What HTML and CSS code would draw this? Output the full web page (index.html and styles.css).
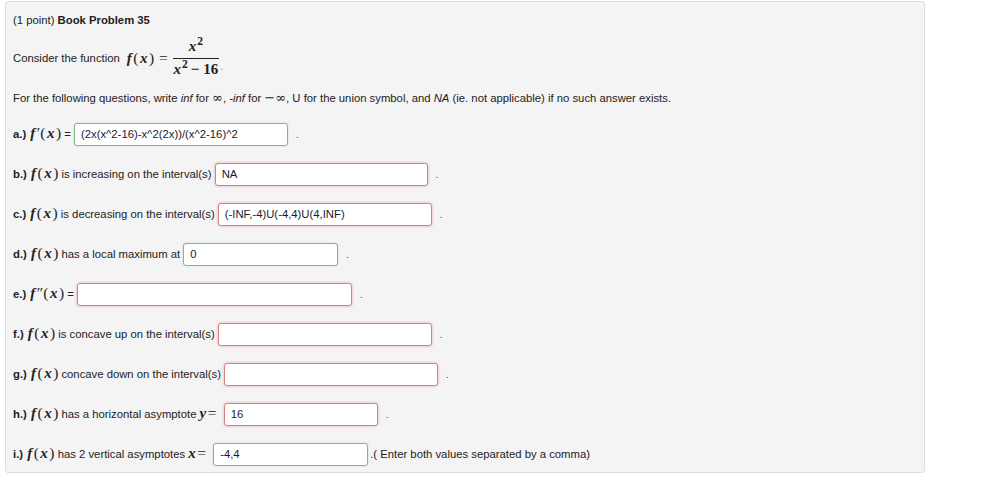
FILE: index.html
```html
<!DOCTYPE html>
<html>
<head>
<meta charset="utf-8">
<link rel="stylesheet" href="styles.css">
</head>
<body>
<div class="panel">
  <div class="title">(1 point) <b>Book Problem 35</b></div>
  <div class="consider"><span>Consider the function</span><span class="math fx"><span class="m">f</span><span class="mr">(</span><span class="m">x</span><span class="mr">)</span></span><span class="mr eq">=</span><span class="frac"><span class="num"><span class="m">x</span><span class="sup">2</span></span><span class="den"><span class="m">x</span><span class="sup">2</span><span class="mr minus">−</span><span class="mr">16</span></span></span><span class="dot">.</span></div>
  <div class="intro">For the following questions, write <i>inf</i> for <span class="inf">∞</span>, <i>-inf</i> for <span class="inf">−∞</span>, U for the union symbol, and <i>NA</i> (ie. not applicable) if no such answer exists.</div>
  <div class="rows">
    <div class="row"><b>a.)</b> <span class="math"><span class="m">f</span><span class="mr">′(</span><span class="m">x</span><span class="mr">)</span></span> = <span class="inp ok w214">(2x(x^2-16)-x^2(2x))/(x^2-16)^2</span><span class="per">.</span></div>
    <div class="row"><b>b.)</b> <span class="math"><span class="m">f</span><span class="mr">(</span><span class="m">x</span><span class="mr">)</span></span> is increasing on the interval(s) <span class="inp bad w213">NA</span><span class="per">.</span></div>
    <div class="row"><b>c.)</b> <span class="math"><span class="m">f</span><span class="mr">(</span><span class="m">x</span><span class="mr">)</span></span> is decreasing on the interval(s) <span class="inp bad w214">(-INF,-4)U(-4,4)U(4,INF)</span><span class="per">.</span></div>
    <div class="row"><b>d.)</b> <span class="math"><span class="m">f</span><span class="mr">(</span><span class="m">x</span><span class="mr">)</span></span> has a local maximum at <span class="inp ok w155">0</span><span class="per">.</span></div>
    <div class="row"><b>e.)</b> <span class="math"><span class="m">f</span><span class="mr">″(</span><span class="m">x</span><span class="mr">)</span></span> = <span class="inp bad w275"></span><span class="per">.</span></div>
    <div class="row"><b>f.)</b> <span class="math"><span class="m">f</span><span class="mr">(</span><span class="m">x</span><span class="mr">)</span></span> is concave up on the interval(s) <span class="inp bad w214"></span><span class="per">.</span></div>
    <div class="row"><b>g.)</b> <span class="math"><span class="m">f</span><span class="mr">(</span><span class="m">x</span><span class="mr">)</span></span> concave down on the interval(s) <span class="inp bad w214"></span><span class="per">.</span></div>
    <div class="row"><b>h.)</b> <span class="math"><span class="m">f</span><span class="mr">(</span><span class="m">x</span><span class="mr">)</span></span> has a horizontal asymptote <span class="math"><span class="m">y</span><span class="mr eq">=</span></span> <span class="inp bad w154">16</span><span class="per">.</span></div>
    <div class="row"><b>i.)</b> <span class="math"><span class="m">f</span><span class="mr">(</span><span class="m">x</span><span class="mr">)</span></span> has 2 vertical asymptotes <span class="math"><span class="m">x</span><span class="mr eq">=</span></span> <span class="inp ok w155">-4,4</span><span class="note">.( Enter both values separated by a comma)</span></div>
  </div>
</div>
</body>
</html>
```

FILE: styles.css
```css
html, body {
  margin: 0;
  padding: 0;
  background: #ffffff;
}
body {
  font-family: "Liberation Sans", Arial, sans-serif;
  font-size: 11.3px;
  color: #222;
}
.panel {
  margin: 1px 0 0 5px;
  width: 911px;
  height: 470px;
  background: #f4f4f4;
  border: 1px solid #dedede;
  border-radius: 3px;
  padding: 0 0 0 7px;
}
.title {
  height: 14px;
  line-height: 14px;
  margin-top: 11px;
}
.consider {
  display: flex;
  align-items: center;
  height: 40px;
  margin-top: 11px;
}
.m {
  font-family: "Liberation Serif", "Times New Roman", serif;
  font-style: italic;
  font-weight: bold;
  font-size: 15px;
}
.mr {
  font-family: "Liberation Serif", "Times New Roman", serif;
  font-size: 15.5px;
}
.math {
  white-space: nowrap;
}
.math .m + .mr,
.math .mr + .m {
  margin-left: 1.5px;
}
.fx {
  margin-left: 7px;
}
.eq {
  margin: 0 4px 0 5px;
}
.frac {
  display: inline-flex;
  flex-direction: column;
  align-items: center;
  margin-left: 1px;
  width: 46px;
}
.num {
  width: 100%;
  text-align: center;
  border-bottom: 1px solid #222;
  line-height: 19px;
  padding-bottom: 1px;
}
.den {
  line-height: 19px;
  padding-top: 1px;
  white-space: nowrap;
}
.frac .mr { font-weight: bold; font-size: 15px; }
.sup {
  font-family: "Liberation Serif", serif;
  font-weight: bold;
  font-size: 11.5px;
  position: relative;
  top: -6px;
  margin-left: 1px;
}
.minus {
  margin: 0 4px 0 3px;
}
.dot {
  margin-left: 2px;
  margin-top: 18px;
  font-size: 8px;
}
.intro {
  margin-top: 13px;
  height: 14px;
  line-height: 14px;
}
.inf {
  font-family: "DejaVu Serif", serif;
  font-size: 13px;
}
.rows {
  display: flex;
  flex-direction: column;
  gap: 17px;
  margin-top: 16px;
}
.row {
  height: 23px;
  line-height: 23px;
  white-space: nowrap;
}
.row b { margin-right: 1px; }
.inp {
  display: inline-block;
  vertical-align: middle;
  box-sizing: border-box;
  height: 23px;
  line-height: 21px;
  padding: 0 6px;
  background: #fff;
  border-radius: 3px;
  color: #1a1a2e;
  position: relative;
  top: -1px;
}
.ok {
  border: 1px solid #7fb97f;
  box-shadow: 0 0 2px rgba(92, 184, 92, 0.35);
}
.bad {
  border: 1px solid #d77f7f;
  box-shadow: 0 0 3px rgba(217, 83, 79, 0.45);
}
.w213 { width: 213px; }
.w214 { width: 214px; }
.w154 { width: 154px; }
.w155 { width: 155px; }
.w275 { width: 275px; }
.per {
  margin-left: 8px;
  font-size: 9px;
}
.note {
  margin-left: 2px;
}
```
